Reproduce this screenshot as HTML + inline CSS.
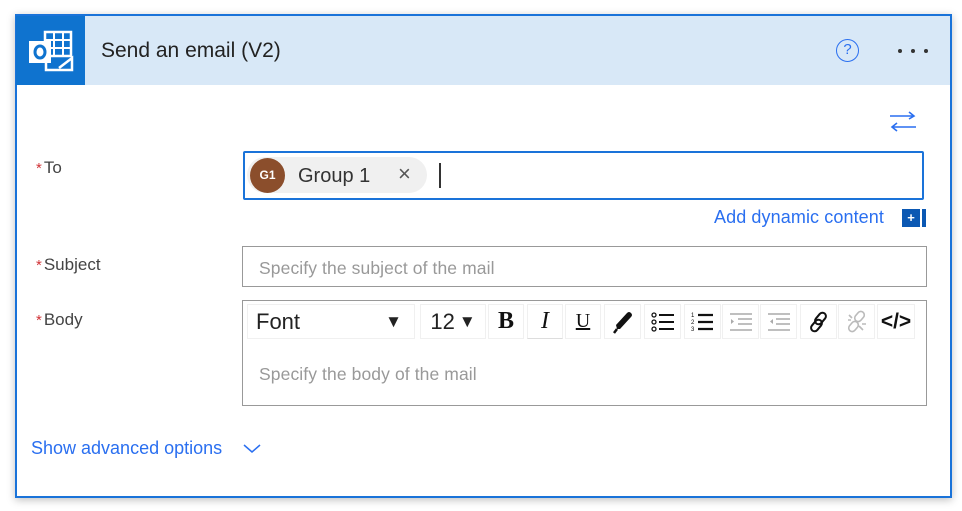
<!DOCTYPE html>
<html><head><meta charset="utf-8"><style>
*{box-sizing:border-box;margin:0;padding:0}
body{width:962px;height:511px;background:#fff;font-family:"Liberation Sans",sans-serif;position:relative;overflow:hidden}
.a{position:absolute;white-space:nowrap}
.card{left:15px;top:14px;width:937px;height:484px;border:2px solid #1a73d9;box-shadow:0 2px 8px rgba(0,0,0,.25);background:#fff}
.hdr{left:16px;top:16px;width:934px;height:69px;background:#d8e8f7}
.ico{left:16px;top:16px;width:69px;height:69px;background:#0f73cf}
.lbl{font-size:17px;color:#444}
.lbl b{color:#d13438;font-weight:normal;font-size:15px;margin-right:2px}
.tb{top:304px;height:35px;border:1px solid #f0f0f0;background:#fff;display:flex;align-items:center;justify-content:center}
</style></head><body>
<div class="a card"></div>
<div class="a hdr"></div>
<div class="a ico">
<svg width="69" height="69" viewBox="0 0 69 69">
<rect x="29" y="16" width="26" height="24" fill="none" stroke="#fff" stroke-width="2.5"/>
<line x1="38" y1="16" x2="38" y2="40" stroke="#fff" stroke-width="2"/>
<line x1="47" y1="16" x2="47" y2="40" stroke="#fff" stroke-width="2"/>
<line x1="29" y1="24" x2="55" y2="24" stroke="#fff" stroke-width="2"/>
<line x1="29" y1="32" x2="55" y2="32" stroke="#fff" stroke-width="2"/>
<path d="M30 46 L30 54 L56 54 L56 42 L43 52" fill="none" stroke="#fff" stroke-width="2.5"/>
<rect x="13" y="25" width="22" height="22" fill="#fff"/>
<ellipse cx="24" cy="36" rx="5" ry="6" fill="none" stroke="#0f73cf" stroke-width="3"/>
</svg></div>
<div class="a" style="left:101px;top:39px;font-size:21px;color:#222">Send an email (V2)</div>
<div class="a" style="left:836px;top:39px;width:23px;height:23px;border:1.6px solid #2a6ff0;border-radius:50%;color:#2a6ff0;font-size:15px;text-align:center;line-height:20px">?</div>
<div class="a" style="left:898px;top:49px;width:4px;height:4px;border-radius:2px;background:#333"></div>
<div class="a" style="left:911px;top:49px;width:4px;height:4px;border-radius:2px;background:#333"></div>
<div class="a" style="left:924px;top:49px;width:4px;height:4px;border-radius:2px;background:#333"></div>

<svg class="a" style="left:888px;top:110px" width="30" height="24" viewBox="0 0 30 24"><path d="M2 6H26M21 2L26 6L21 9M28 17H4M9 13L4 17L9 21" fill="none" stroke="#2a6ff0" stroke-width="1.6"/></svg>

<div class="a lbl" style="left:36px;top:158px"><b>*</b>To</div>
<div class="a lbl" style="left:36px;top:255px"><b>*</b>Subject</div>
<div class="a lbl" style="left:36px;top:310px"><b>*</b>Body</div>

<div class="a" style="left:243px;top:151px;width:681px;height:49px;border:2px solid #1a73d9;border-radius:2px"></div>
<div class="a" style="left:247px;top:157px;width:180px;height:36px;border-radius:18px;background:#f0f0f0"></div>
<div class="a" style="left:250px;top:158px;width:35px;height:35px;border-radius:50%;background:#8b4e2c;color:#fff;font-size:12px;font-weight:bold;text-align:center;line-height:35px">G1</div>
<div class="a" style="left:298px;top:165px;font-size:20px;color:#333">Group 1</div>
<div class="a" style="left:398px;top:161px;font-size:22px;color:#555">×</div>
<div class="a" style="left:439px;top:163px;width:1.5px;height:25px;background:#333"></div>

<div class="a" style="left:714px;top:207px;font-size:18px;color:#2a6ff0;letter-spacing:0.1px">Add dynamic content</div>
<div class="a" style="left:902px;top:209px;width:18px;height:18px;background:#0b58b3;color:#fff;font-size:13px;text-align:center;line-height:18px;font-weight:bold">+</div>
<div class="a" style="left:922px;top:209px;width:4px;height:18px;background:#0b58b3"></div>

<div class="a" style="left:242px;top:246px;width:685px;height:41px;border:1.5px solid #999"></div>
<div class="a" style="left:259px;top:258px;font-size:17.5px;color:#999;letter-spacing:0.1px">Specify the subject of the mail</div>

<div class="a" style="left:242px;top:300px;width:685px;height:106px;border:1.5px solid #999"></div>
<div class="a tb" style="left:247px;width:168px;justify-content:space-between;padding:0 12px 0 8px;font-size:22px;color:#222"><span>Font</span><span style="font-size:17px">▼</span></div>
<div class="a tb" style="left:420px;width:66px;font-size:22px;color:#222">12<span style="font-size:17px;margin-left:4px">▼</span></div>
<div class="a tb" style="left:488px;width:36px;font:bold 24px 'Liberation Serif',serif;color:#111">B</div>
<div class="a tb" style="left:527px;width:36px;font:italic 24px 'Liberation Serif',serif;color:#111;border-bottom:1px solid #ddd">I</div>
<div class="a tb" style="left:565px;width:36px;font:20px 'Liberation Serif',serif;color:#111;text-decoration:underline">U</div>
<div class="a tb" style="left:604px;width:37px"><svg width="22" height="24" viewBox="0 0 22 24"><path d="M5 19L4 15L15 3Q17 1 19 3Q21 5 19 7L8 19Z" fill="#111"/><path d="M2 23L5 19" stroke="#111" stroke-width="2.5"/></svg></div>
<div class="a tb" style="left:644px;width:37px"><svg width="26" height="22" viewBox="0 0 26 22"><g fill="none" stroke="#111" stroke-width="1.3"><circle cx="4" cy="4" r="2"/><circle cx="4" cy="11" r="2"/><circle cx="4" cy="18" r="2"/></g><g stroke="#111" stroke-width="2"><path d="M9 4H24M9 11H24M9 18H24"/></g></svg></div>
<div class="a tb" style="left:684px;width:37px"><svg width="26" height="22" viewBox="0 0 26 22"><g font-size="6" fill="#111"><text x="1" y="6">1</text><text x="1" y="13">2</text><text x="1" y="20">3</text></g><path d="M8 4H23M8 11H23M8 18H23" stroke="#111" stroke-width="2.2"/></svg></div>
<div class="a tb" style="left:722px;width:37px"><svg width="26" height="22" viewBox="0 0 26 22"><path d="M2 3H24M10 8H24M10 13H24M2 19H24" stroke="#aaa" stroke-width="1.6"/><path d="M3 8L6 10.5L3 13Z" fill="#aaa"/></svg></div>
<div class="a tb" style="left:760px;width:37px"><svg width="26" height="22" viewBox="0 0 26 22"><path d="M2 3H24M10 8H24M10 13H24M2 19H24" stroke="#aaa" stroke-width="1.6"/><path d="M7 8L4 10.5L7 13Z" fill="#aaa"/></svg></div>
<div class="a tb" style="left:800px;width:37px"><svg width="24" height="24" viewBox="0 0 24 24"><g fill="none" stroke="#111" stroke-width="2"><rect x="10" y="2" width="7" height="13" rx="3.5" transform="rotate(40 13.5 8.5)"/><rect x="6" y="9" width="7" height="13" rx="3.5" transform="rotate(40 9.5 15.5)"/></g></svg></div>
<div class="a tb" style="left:838px;width:37px"><svg width="24" height="24" viewBox="0 0 24 24"><g fill="none" stroke="#bbb" stroke-width="1.6"><rect x="11" y="1" width="7" height="11" rx="3.5" transform="rotate(40 14.5 6.5)"/><rect x="5" y="11" width="7" height="11" rx="3.5" transform="rotate(40 8.5 16.5)"/><path d="M4 5L7 8M14 16L18 20M3 10H6M17 14H21"/></g></svg></div>
<div class="a tb" style="left:877px;width:38px;font-size:21px;color:#111;font-weight:bold">&lt;/&gt;</div>
<div class="a" style="left:259px;top:364px;font-size:17.5px;color:#999;letter-spacing:0.1px">Specify the body of the mail</div>

<div class="a" style="left:31px;top:438px;font-size:18px;color:#2a6ff0">Show advanced options</div>
<svg class="a" style="left:243px;top:443px" width="18" height="12" viewBox="0 0 18 12"><path d="M1 2L9 9L17 2" fill="none" stroke="#2a6ff0" stroke-width="1.5"/></svg>
</body></html>
